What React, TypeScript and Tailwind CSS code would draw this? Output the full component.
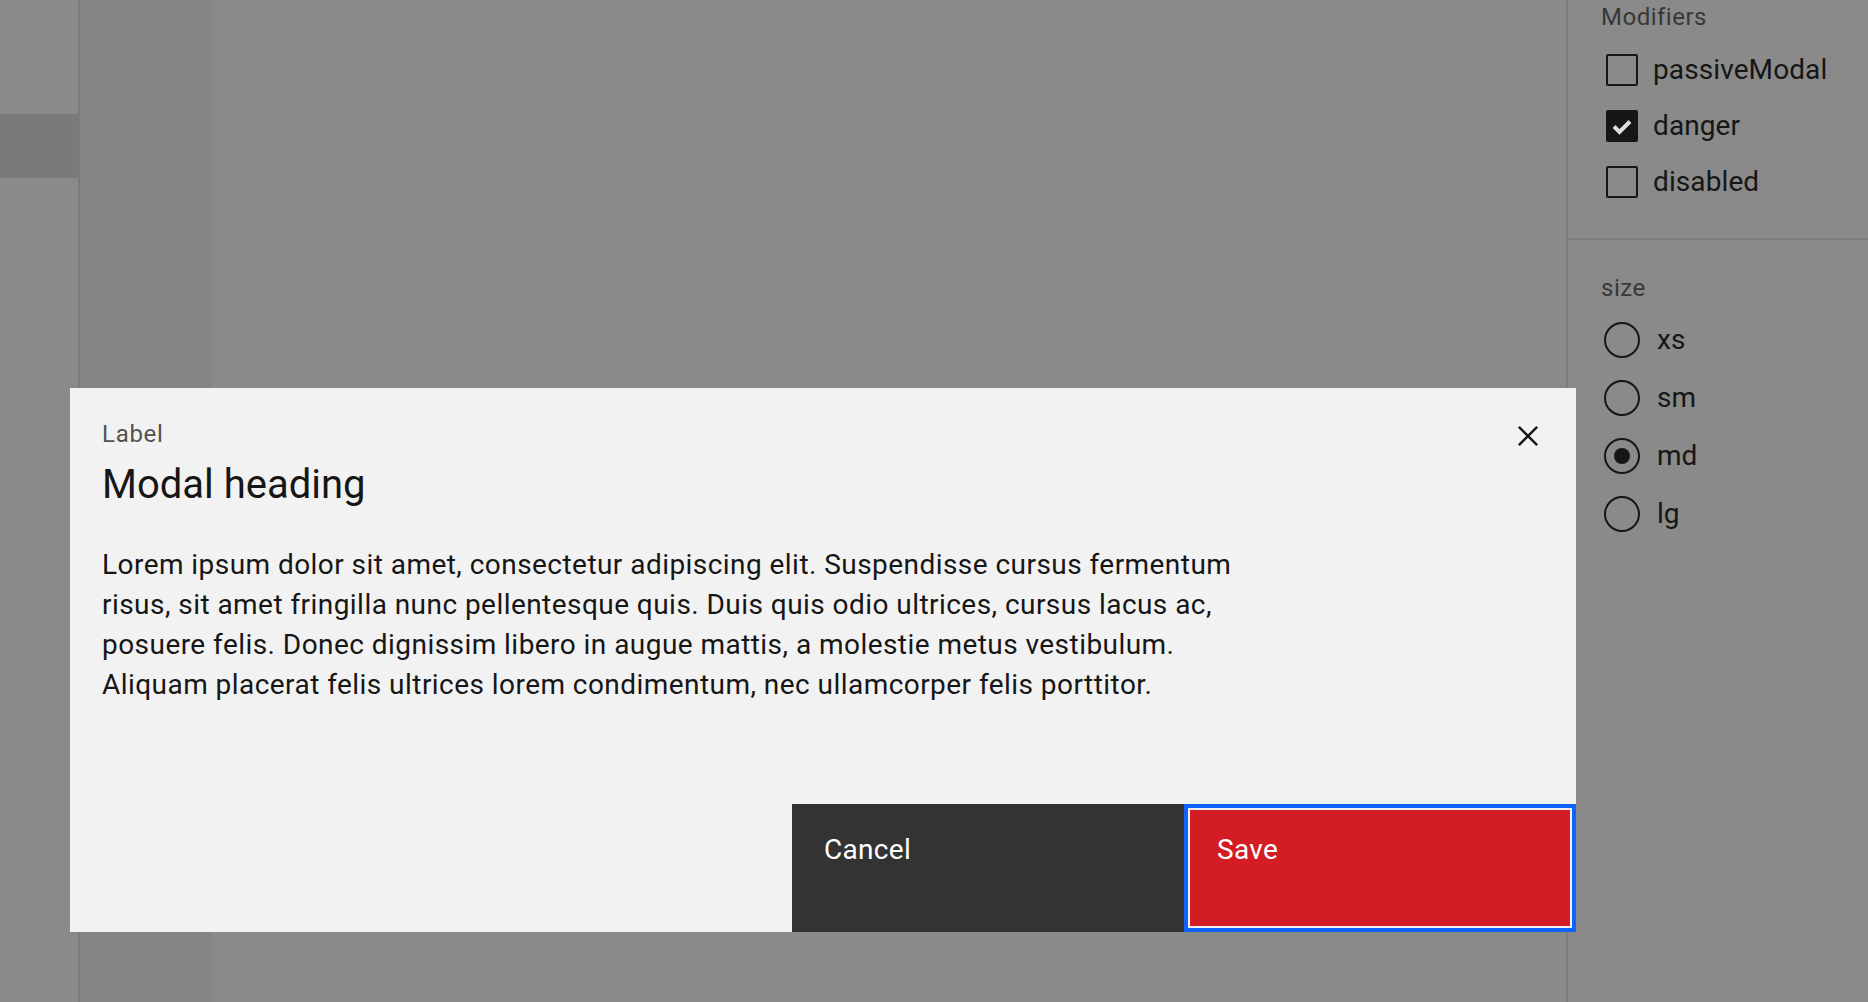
const font = { fontFamily: "Roboto, 'Liberation Sans', sans-serif" };

const modifiers = [
  { name: "passiveModal", checked: false },
  { name: "danger", checked: true },
  { name: "disabled", checked: false },
];

const sizes = [
  { name: "xs", checked: false },
  { name: "sm", checked: false },
  { name: "md", checked: true },
  { name: "lg", checked: false },
];

const bodyLines = [
  "Lorem ipsum dolor sit amet, consectetur adipiscing elit. Suspendisse cursus fermentum",
  "risus, sit amet fringilla nunc pellentesque quis. Duis quis odio ultrices, cursus lacus ac,",
  "posuere felis. Donec dignissim libero in augue mattis, a molestie metus vestibulum.",
  "Aliquam placerat felis ultrices lorem condimentum, nec ullamcorper felis porttitor.",
];

function Checkbox({ name, checked }: { name: string; checked: boolean }) {
  return (
    <div className="flex h-[56px] items-center ml-[5px]">
      <div
        className={`flex h-[32px] w-[32px] items-center justify-center rounded-[2px] ${
          checked ? "bg-[#161616]" : "border-2 border-[#161616]"
        }`}
      >
        {checked && (
          <svg width="32" height="32" viewBox="0 0 32 32" fill="none">
            <path d="M8 16.5 L13.5 22 L24 11.5" stroke="#dedede" strokeWidth="4" />
          </svg>
        )}
      </div>
      <span className="ml-[15px] text-[28px] leading-[36px] tracking-[0.1px] text-[#161616]">{name}</span>
    </div>
  );
}

function Radio({ name, checked }: { name: string; checked: boolean }) {
  return (
    <div className="flex h-[58px] items-center ml-[3px]">
      <div className="flex h-[36px] w-[36px] items-center justify-center rounded-full border-2 border-[#161616]">
        {checked && <div className="h-[16px] w-[16px] rounded-full bg-[#161616]" />}
      </div>
      <span className="ml-[17px] text-[28px] leading-[36px] text-[#161616]">{name}</span>
    </div>
  );
}

export default function App() {
  return (
    <div className="relative flex h-[1002px] w-[1868px] overflow-hidden bg-[#8a8a8a]" style={font}>
      {/* left nav */}
      <div className="flex w-[80px] flex-col border-r-2 border-[#7b7b7b]">
        <div className="h-[114px]" />
        <div className="h-[64px] bg-[#7a7a7a]" />
      </div>
      <div className="w-[132px] bg-[#858585]" />
      <div className="flex-1 border-r-2 border-[#7d7d7d]" />

      {/* knobs panel */}
      <div className="w-[300px]">
        <div className="px-[33px]">
          <div className="mt-[1px] text-[24px] leading-[32px] tracking-[0.5px] text-[#383838]">Modifiers</div>
          <div className="mt-[9px]">
            {modifiers.map((m) => (
              <Checkbox key={m.name} {...m} />
            ))}
          </div>
        </div>
        <div className="mt-[28px] h-[2px] bg-[#7d7d7d]" />
        <div className="px-[33px]">
          <div className="mt-[32px] text-[24px] leading-[32px] tracking-[0.5px] text-[#383838]">size</div>
          <div className="mt-[7px]">
            {sizes.map((s) => (
              <Radio key={s.name} {...s} />
            ))}
          </div>
        </div>
      </div>

      {/* modal */}
      <div className="absolute left-[70px] top-[388px] flex h-[544px] w-[1506px] flex-col bg-[#f2f2f2]">
        <button className="absolute right-[28px] top-[28px] h-[40px] w-[40px]">
          <svg width="40" height="40" viewBox="0 0 32 32" fill="#161616">
            <path d="M24 9.4L22.6 8 16 14.6 9.4 8 8 9.4 14.6 16 8 22.6 9.4 24 16 17.4 22.6 24 24 22.6 17.4 16 24 9.4z" />
          </svg>
        </button>
        <div className="px-[32px] pt-[30px]">
          <div className="text-[24px] leading-[32px] tracking-[0.7px] text-[#525252]">Label</div>
          <h2 className="mt-[11px] text-[40px] leading-[48px] text-[#161616]">Modal heading</h2>
          <p className="mt-[36px] text-[28px] leading-[40px] tracking-[0.45px] text-[#161616]">
            {bodyLines.map((l) => (
              <span key={l} className="block">
                {l}
              </span>
            ))}
          </p>
        </div>
        <div className="mt-auto flex justify-end">
          <button className="flex h-[128px] w-[392px] items-start bg-[#333333] pl-[32px] pt-[28px] text-left text-[28px] leading-[36px] tracking-[0.3px] text-white">
            Cancel
          </button>
          <button className="flex h-[128px] w-[392px] items-start border-4 border-[#0f62fe] bg-[#d41c24] pl-[29px] pt-[24px] text-left text-[28px] leading-[36px] tracking-[0.3px] text-white shadow-[inset_0_0_0_2px_#f2f2f2]">
            Save
          </button>
        </div>
      </div>
    </div>
  );
}
